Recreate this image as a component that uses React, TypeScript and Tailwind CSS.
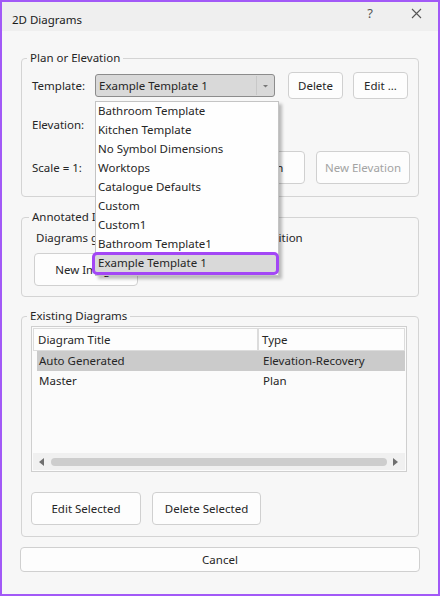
import React from "react";

const TEMPLATES = [
  "Bathroom Template",
  "Kitchen Template",
  "No Symbol Dimensions",
  "Worktops",
  "Catalogue Defaults",
  "Custom",
  "Custom1",
  "Bathroom Template1",
  "Example Template 1",
];

const btn =
  "flex items-center justify-center bg-[#fdfdfd] border border-[#d0d0d0] rounded-[4px] text-[#262626]";

function TemplateDropdown() {
  return (
    <div className="absolute left-[93px] top-[99px] w-[184px] h-[175px] bg-[#fefefe] border border-[#c4c4c4] shadow-[3px_3px_3px_rgba(0,0,0,0.25)]">
      {TEMPLATES.map((t, i) =>
        i === TEMPLATES.length - 1 ? (
          <div
            key={t}
            className="-ml-[4px] h-[23px] w-[187px] border-[3px] border-[#a347f5] rounded-[5px] bg-[#d9d9d9] flex items-center pl-[3px] pb-[2px] -mt-[2px]"
          >
            {t}
          </div>
        ) : (
          <div key={t} className="h-[19px] flex items-center px-[2px] pb-[2px]">
            {t}
          </div>
        )
      )}
    </div>
  );
}

export default function App() {
  return (
    <div className="relative w-[440px] h-[596px] border-2 border-[#a259f7] bg-[#f7f7f7] flex flex-col text-[11.5px] text-[#262626] font-['Noto_Sans',sans-serif] overflow-hidden">
      {/* Title bar */}
      <div className="h-[29px] bg-[#efefef] flex items-start shrink-0">
        <div className="pl-[10px] mt-[10px] leading-[16px] text-[#1a1a1a]">2D Diagrams</div>
        <div className="ml-auto flex items-start mt-[3px]">
          <span className="text-[13px] text-[#555] leading-[16px] mr-[38px]">?</span>
          <svg width="11" height="11" viewBox="0 0 11 11" className="mt-[3px] mr-[16px]">
            <path d="M1 1L10 10M10 1L1 10" stroke="#555" strokeWidth="1.1" />
          </svg>
        </div>
      </div>

      <div className="flex flex-col px-[19px] pt-[19px]">
        {/* Plan or Elevation */}
        <fieldset className="border border-[#d4d4d4] rounded-[4px] pl-[10px] pr-[8px] pb-[12px]">
          <legend className="-ml-[5px] px-[3px] leading-[16px]">Plan or Elevation</legend>
          <div className="flex items-center h-[27px] mt-[6px]">
            <span className="w-[63px]">Template:</span>
            <div className="w-[180px] h-[23px] bg-[#d9d9d9] border border-[#8c8c8c] rounded-[3px] flex items-center pl-[3px]">
              <span className="flex-1">Example Template 1</span>
              <div className="w-px h-[19px] bg-[#c8c8c8]" />
              <svg width="17" height="8" viewBox="0 0 17 8">
                <path d="M6 3h5l-2.5 2.5z" fill="#777" />
              </svg>
            </div>
            <div className={btn + " w-[55px] h-[27px] ml-[13px]"}>Delete</div>
            <div className={btn + " w-[55px] h-[27px] ml-[10px]"}>Edit ...</div>
          </div>
          <div className="flex items-center h-[27px] mt-[12px]">
            <span className="w-[63px]">Elevation:</span>
            <div className="w-[180px] h-[23px] bg-[#fdfdfd] border border-[#c8c8c8] rounded-[3px]" />
          </div>
          <div className="flex items-center h-[33px] mt-[13px]">
            <span className="w-[63px]">Scale = 1:</span>
            <div className="w-[95px] h-[23px] bg-[#fdfdfd] border border-[#c8c8c8] rounded-[3px]" />
            <div className={btn + " w-[94px] h-[33px] ml-[21px]"}>New Plan</div>
            <div className={btn + " w-[94px] h-[33px] ml-[11px] text-[#a3a3a3]"}>New Elevation</div>
          </div>
        </fieldset>

        {/* Annotated Images */}
        <fieldset className="border border-[#d4d4d4] rounded-[4px] pl-[12px] pb-[10px] mt-[12px]">
          <legend className="-ml-[5px] px-[3px] leading-[16px]">Annotated Images</legend>
          <div className="leading-[16px] mt-[5px] pl-[2px] whitespace-nowrap">
            Diagrams generated for the current view position
          </div>
          <div className={btn + " w-[104px] h-[33px] mt-[7px]"}>New Image</div>
        </fieldset>

        {/* Existing Diagrams */}
        <fieldset className="border border-[#d4d4d4] rounded-[4px] pl-[9px] pb-[11px] mt-[11px]">
          <legend className="-ml-[4px] px-[3px] leading-[16px]">Existing Diagrams</legend>
          <div className="mt-[2px] w-[376px] h-[146px] border border-[#cfcfcf] bg-[#fbfbfb] p-px flex flex-col">
            <div className="flex h-[23px] border border-[#dcdcdc] bg-[#fdfdfd]">
              <div className="w-[225px] pl-[4px] flex items-center border-r-2 border-[#dcdcdc]">Diagram Title</div>
              <div className="flex-1 pl-[3px] flex items-center">Type</div>
            </div>
            <div className="flex h-[20px] ml-[4px] bg-[#cbcbcb] items-center">
              <span className="w-[226px] pl-[2px]">Auto Generated</span>
              <span>Elevation-Recovery</span>
            </div>
            <div className="flex h-[19px] ml-[4px] items-center">
              <span className="w-[226px] pl-[2px]">Master</span>
              <span>Plan</span>
            </div>
            <div className="flex-1" />
            <div className="h-[17px] bg-[#f0f0f0] flex items-center px-[6px]">
              <svg width="6" height="8" viewBox="0 0 6 8">
                <path d="M5 0v8L0 4z" fill="#6e6e6e" />
              </svg>
              <div className="flex-1 h-[8px] rounded-full bg-[#cdcdcd] mx-[6px]" />
              <svg width="6" height="8" viewBox="0 0 6 8">
                <path d="M0 0v8l5-4z" fill="#6e6e6e" />
              </svg>
            </div>
          </div>
          <div className="flex mt-[20px]">
            <div className={btn + " w-[110px] h-[33px]"}>Edit Selected</div>
            <div className={btn + " w-[109px] h-[33px] ml-[11px]"}>Delete Selected</div>
          </div>
        </fieldset>

        <div className={btn + " -mx-px h-[25px] mt-[10px]"}>Cancel</div>
      </div>

      <TemplateDropdown />
    </div>
  );
}
